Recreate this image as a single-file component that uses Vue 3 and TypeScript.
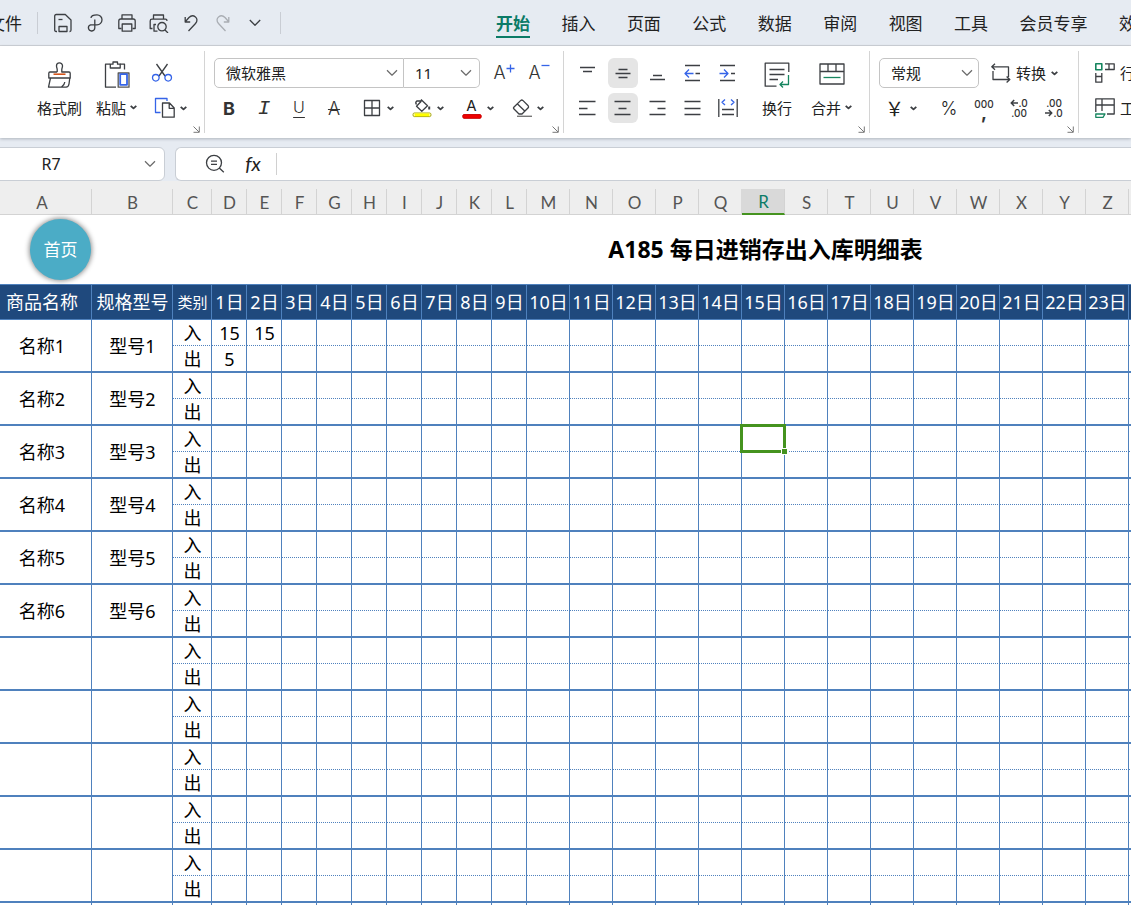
<script setup lang="ts">
import { h, ref, type FunctionalComponent } from 'vue'

type Stroke = { d: string; tone?: string; fill?: boolean; w?: number }
type Glyph = { w: number; h: number; strokes: Stroke[] }

const BLUE = '#3564e8'
const GREEN = '#16855f'

const glyphs: Record<string, Glyph> = {
  save: { w: 20, h: 20, strokes: [
    { d: 'M4 18.5H3.2Q1.7 18.5 1.7 17V3Q1.7 1.5 3.2 1.5H12.3L18 7V17Q18 18.5 16.8 18.5H16.5' },
    { d: 'M6 18.5V13.5H14V18.5Z' },
    { d: 'M5.5 6.5H9.5' },
  ] },
  export: { w: 20, h: 20, strokes: [
    { d: 'M6 5C6 2.5 8 1.8 12 1.8A5 5 0 0 1 12 11.8H5.5A3.2 3.2 0 1 0 9.8 15V6.5' },
  ] },
  print: { w: 20, h: 20, strokes: [
    { d: 'M5 6V1.8H15V6' },
    { d: 'M4.5 15.5H1.8V8Q1.8 6 3.8 6H16.2Q18.2 6 18.2 8V15.5H15.5' },
    { d: 'M5.2 11H14.8V18.2H5.2Z' },
  ] },
  preview: { w: 20, h: 20, strokes: [
    { d: 'M4.5 6V2H14.5V6' },
    { d: 'M3.5 15.5H1.2V8Q1.2 6.2 3 6.2H16.5Q18 6.2 18 8' },
    { d: 'M7 11.5H5V18.2H8.5' },
    { d: 'M13 9.5A4.2 4.2 0 1 0 13 17.9A4.2 4.2 0 1 0 13 9.5M16 17L19 20' },
  ] },
  undo: { w: 20, h: 20, strokes: [{ d: 'M4.2 4V9H9.2M4.5 8.5L8 4.5C12 .5 19 5 14.5 10.5L7.5 18' }] },
  redo: { w: 20, h: 20, strokes: [{ d: 'M15.8 4V9H10.8M15.5 8.5L12 4.5C8 .5 1 5 5.5 10.5L12.5 18', tone: '#a9adb3' }] },
  down: { w: 12, h: 8, strokes: [{ d: 'M.8 1L6 6.2L11.2 1' }] },
  chevron: { w: 12, h: 8, strokes: [{ d: 'M1 1.3L6 6.2L11 1.3', tone: '#6b6b6b', w: 1.2 }] },
  caret: { w: 7, h: 5, strokes: [{ d: 'M.7 .8L3.5 3.4L6.3 .8', w: 1.8 }] },
  brush: { w: 26, h: 28, strokes: [
    { d: 'M10.2 11V8.5C10.2 7 9.5 6.8 9.5 4.8A3 3 0 0 1 15.5 4.8C15.5 6.8 14.8 7 14.8 8.5V11H22Q23.2 11 23.2 12.2V17H1.8V12.2Q1.8 11 3 11H10.2' },
    { d: 'M3.5 17L1.5 26.2H19Q21.5 26 22 23L22.8 17M14.5 26Q17.5 24 17.8 21' },
    { d: 'M6.5 13.2H18.5', tone: '#d4541a', w: 1.6 },
  ] },
  paste: { w: 26, h: 28, strokes: [
    { d: 'M6 3.2H1.5V26.2H12M16 3.2H20.5V8.5' },
    { d: 'M6.3 7V3.2H9V1H13.5V3.2H16.2V7Z' },
    { d: 'M14.2 26.2V12H25V26.2Z', tone: '#555' },
    { d: 'M16.2 13.2H23V23.8H16.2Z', tone: BLUE, w: 1.8 },
  ] },
  cut: { w: 22, h: 20, strokes: [
    { d: 'M5.5 1L14 13M16.5 1L8 13' },
    { d: 'M4.8 11.5A3.3 3.3 0 1 0 4.8 18.1A3.3 3.3 0 1 0 4.8 11.5M17.2 11.5A3.3 3.3 0 1 0 17.2 18.1A3.3 3.3 0 1 0 17.2 11.5', tone: BLUE },
  ] },
  copy: { w: 22, h: 22, strokes: [
    { d: 'M6.5 15.5H1.5V1.5H13V4', tone: BLUE },
    { d: 'M8.5 6H15.5L20.2 11V20.2H8.5ZM15.2 6.3V11.3H20' },
  ] },
  grid: { w: 18, h: 18, strokes: [{ d: 'M1.5 1.5H16.5V16.5H1.5ZM9 1.5V16.5M1.5 9H16.5' }] },
  fill: { w: 20, h: 20, strokes: [
    { d: 'M4.5 6.5A2.5 2.5 0 0 1 4.8 3H9.5M9 1.5L15.5 7.8L9.8 13.3L4.5 8.3L9.5 3' },
    { d: 'M17.2 8.5V11.5', w: 2 },
    { d: 'M2.2 15H17.8Q19 15 19 16.8T17.8 18.6H2.2Q1 18.6 1 16.8T2.2 15Z', tone: '#a8a800', w: 1 },
    { d: 'M2.5 15.4H17.5V18.2H2.5Z', tone: '#ffff00', fill: true },
  ] },
  redbar: { w: 20, h: 5, strokes: [
    { d: 'M2 .6H18Q19.3 .6 19.3 2.4T18 4.3H2Q.7 4.3 .7 2.4T2 .6Z', tone: '#f00000', fill: true },
    { d: 'M2 .6H18Q19.3 .6 19.3 2.4T18 4.3H2Q.7 4.3 .7 2.4T2 .6Z', tone: '#c80000', w: 1 },
  ] },
  eraser: { w: 20, h: 20, strokes: [
    { d: 'M7 16L1.8 10.8Q1 10 1.8 9.2L8.8 2.4Q9.8 1.5 10.8 2.4L16.2 7.8Q17 8.8 16.2 9.8L10 16ZM5.5 6L13 13.2' },
    { d: 'M5 18.3H20', tone: '#777', w: 1.4 },
  ] },
  plus: { w: 9, h: 9, strokes: [{ d: 'M4.5 .5V8.5M.5 4.5H8.5', tone: BLUE }] },
  minus: { w: 9, h: 9, strokes: [{ d: 'M.5 1.5H8.5', tone: BLUE }] },
  top: { w: 18, h: 18, strokes: [{ d: 'M1 3.5H16M4 7.5H13' }] },
  middle: { w: 18, h: 18, strokes: [{ d: 'M4.5 5.5H13.5M1.5 9.5H16.5M4.5 13.5H13.5' }] },
  bottom: { w: 18, h: 18, strokes: [{ d: 'M4 11.5H13M1 15.5H16' }] },
  outdent: { w: 18, h: 18, strokes: [
    { d: 'M1 1.5H16M11.5 9.5H16M1 16.5H16' },
    { d: 'M9.5 9.5H1M5 5.5L1 9.5L5 13.5', tone: BLUE },
  ] },
  indent: { w: 18, h: 18, strokes: [
    { d: 'M1 1.5H16M12 9.5H16M1 16.5H16' },
    { d: 'M.5 9.5H9M5 5.5L9 9.5L5 13.5', tone: BLUE },
  ] },
  left: { w: 18, h: 18, strokes: [{ d: 'M0 2.5H16.5M0 9.5H8.5M0 15.5H16.5' }] },
  center: { w: 18, h: 18, strokes: [{ d: 'M.5 2.5H16.5M4.5 9.5H12.5M.5 15.5H16.5' }] },
  right: { w: 18, h: 18, strokes: [{ d: 'M.5 2.5H16.5M8.5 9.5H16.5M.5 15.5H16.5' }] },
  justify: { w: 18, h: 18, strokes: [{ d: 'M.5 2.5H16.5M.5 9.5H16.5M.5 15.5H16.5' }] },
  distribute: { w: 20, h: 20, strokes: [
    { d: 'M.8 1V19M19.2 1V19M4 11.5H16M4 16.5H16' },
    { d: 'M7 1.5L4 4.3L7 7.1M13 1.5L16 4.3L13 7.1', tone: BLUE },
  ] },
  wrap: { w: 26, h: 26, strokes: [
    { d: 'M12.5 24.2H1.2V1.2H24.8V10' },
    { d: 'M5.5 7.5H20.5M5.5 12.5H20.5M5.5 17.5H14' },
    { d: 'M24.5 13V22.5H16M19 19.5L16 22.5L19 25.5', tone: GREEN },
  ] },
  merge: { w: 26, h: 26, strokes: [
    { d: 'M1 2H25V22H1ZM1 9.5H25M9 2V9.5M17 2V9.5' },
    { d: 'M4.5 15.5H21.5', tone: GREEN },
  ] },
  convert: { w: 20, h: 20, strokes: [
    { d: 'M4 .8L.8 3.8L4 6.8M.8 3.8H17.5V14M2 8V16.5H18.8M15.6 13.5L18.8 16.5L15.6 19.5' },
  ] },
  arrowLeft: { w: 8, h: 8, strokes: [{ d: 'M8 4H1.5M4.2 1L1.2 4L4.2 7', w: 1.5 }] },
  arrowRight: { w: 8, h: 8, strokes: [{ d: 'M0 4H6.5M3.8 1L6.8 4L3.8 7', w: 1.5 }] },
  rows: { w: 20, h: 20, strokes: [
    { d: 'M10 .8H19.2V6.5H10M14 .8V6.5M.8 10V19.2H6.8V10M.8 13.5H6.8' },
    { d: 'M.8 .8H6.8V6.8H.8Z', tone: GREEN, w: 1.6 },
  ] },
  sheet: { w: 20, h: 20, strokes: [
    { d: 'M.8 14V.8H19.2V16H12M.8 7H19.2M7 .8V13' },
    { d: 'M.8 16H10L8 19.3H.8Z', tone: GREEN },
  ] },
  launcher: { w: 7, h: 7, strokes: [{ d: 'M.5 .5L6 6M6.3 .5V6.3H.5', tone: '#777', w: 1 }] },
  lens: { w: 20, h: 20, strokes: [
    { d: 'M9 1.3A7.5 7.5 0 1 0 9 16.3A7.5 7.5 0 1 0 9 1.3M14.3 14L18.8 18.2M6 7.2H12M6 10.4H12' },
  ] },
}

const Icon: FunctionalComponent<{ name: string }> = (props) => {
  const g = glyphs[props.name]
  return h(
    'svg',
    { width: g.w, height: g.h, viewBox: `0 0 ${g.w} ${g.h}`, fill: 'none', 'aria-hidden': 'true' },
    g.strokes.map((s) =>
      h('path', {
        d: s.d,
        fill: s.fill ? s.tone : 'none',
        stroke: s.fill ? 'none' : s.tone ?? '#3c3f43',
        'stroke-width': s.w ?? 1.3,
        'stroke-linejoin': 'round',
      }),
    ),
  )
}
Icon.props = ['name']

const quick = [
  { icon: 'save', label: '保存' },
  { icon: 'export', label: '输出为PDF' },
  { icon: 'print', label: '打印' },
  { icon: 'preview', label: '打印预览' },
  { icon: 'undo', label: '撤销' },
  { icon: 'redo', label: '恢复' },
  { icon: 'down', label: '更多' },
]
const tabs = ['开始', '插入', '页面', '公式', '数据', '审阅', '视图', '工具', '会员专享', '效率']
const activeTab = ref('开始')

const aligns = [
  { icon: 'top', label: '顶端对齐' },
  { icon: 'middle', label: '垂直居中', on: true },
  { icon: 'bottom', label: '底端对齐' },
  { icon: 'outdent', label: '减少缩进' },
  { icon: 'indent', label: '增加缩进' },
  { icon: 'left', label: '左对齐' },
  { icon: 'center', label: '水平居中', on: true },
  { icon: 'right', label: '右对齐' },
  { icon: 'justify', label: '两端对齐' },
  { icon: 'distribute', label: '分散对齐' },
]

const cellRef = ref('R7')
const formula = ref('')

const days = Array.from({ length: 31 }, (_, i) => i + 1)
const columnName = (n: number): string =>
  n < 26 ? String.fromCharCode(65 + n) : 'A' + String.fromCharCode(65 + n - 26)
const letters = Array.from({ length: 35 }, (_, i) => columnName(i))
const selectedColumn = 'R'

type Item = { name: string; model: string; inbound: Record<number, number>; outbound: Record<number, number> }
const items: Item[] = Array.from({ length: 14 }, (_, i) => ({
  name: i < 6 ? `名称${i + 1}` : '',
  model: i < 6 ? `型号${i + 1}` : '',
  inbound: i === 0 ? { 1: 15, 2: 15 } : {},
  outbound: i === 0 ? { 1: 5 } : {},
}))
const isSelected = (row: number, day: number) => row === 2 && day === 15
</script>

<template>
  <div class="app">
    <header class="topbar">
      <button class="file" type="button">文件</button>
      <div class="quick">
        <button v-for="q in quick" :key="q.icon" type="button" :aria-label="q.label"><Icon :name="q.icon" /></button>
      </div>
      <nav class="tabs">
        <button
          v-for="t in tabs"
          :key="t"
          type="button"
          :class="{ active: t === activeTab }"
          @click="activeTab = t"
        >{{ t }}</button>
      </nav>
    </header>

    <section class="ribbon">
      <div class="group clipboard">
        <button class="big" type="button"><span class="pic"><Icon name="brush" /></span><span class="cap">格式刷</span></button>
        <button class="big" type="button"><span class="pic"><Icon name="paste" /></span><span class="cap">粘贴<Icon name="caret" /></span></button>
        <div class="stack">
          <button class="tool" type="button" aria-label="剪切"><Icon name="cut" /></button>
          <button class="tool drop copy" type="button" aria-label="复制"><span><Icon name="copy" /></span><Icon name="caret" /></button>
        </div>
        <button class="launch" type="button" aria-label="剪贴板设置"><Icon name="launcher" /></button>
      </div>

      <div class="group font">
        <div class="stack">
          <div class="line">
            <div class="fontbox">
              <label class="combo face">
                <select aria-label="字体"><option>微软雅黑</option></select><Icon name="chevron" />
              </label>
              <label class="combo size">
                <select aria-label="字号"><option>11</option></select><Icon name="chevron" />
              </label>
            </div>
            <button class="tool letter grow" type="button" aria-label="增大字号">A<Icon name="plus" /></button>
            <button class="tool letter grow" type="button" aria-label="减小字号">A<Icon name="minus" /></button>
          </div>
          <div class="line">
            <button class="tool letter bold" type="button" aria-label="加粗">B</button>
            <button class="tool letter italic" type="button" aria-label="倾斜">I</button>
            <button class="tool letter under" type="button" aria-label="下划线">U</button>
            <button class="tool letter strike" type="button" aria-label="删除线">A</button>
            <div class="drops">
              <button class="tool drop" type="button" aria-label="边框"><span><Icon name="grid" /></span><Icon name="caret" /></button>
              <button class="tool drop" type="button" aria-label="填充颜色"><span><Icon name="fill" /></span><Icon name="caret" /></button>
              <button class="tool drop" type="button" aria-label="字体颜色"><span class="colour">A<Icon name="redbar" /></span><Icon name="caret" /></button>
              <button class="tool drop" type="button" aria-label="清除"><span><Icon name="eraser" /></span><Icon name="caret" /></button>
            </div>
          </div>
        </div>
        <button class="launch" type="button" aria-label="字体设置"><Icon name="launcher" /></button>
      </div>

      <div class="group align">
        <div class="aligns">
          <button
            v-for="a in aligns"
            :key="a.icon"
            class="tool"
            type="button"
            :class="{ on: a.on }"
            :aria-pressed="!!a.on"
            :aria-label="a.label"
          ><Icon :name="a.icon" /></button>
        </div>
        <button class="big" type="button"><span class="pic"><Icon name="wrap" /></span><span class="cap">换行</span></button>
        <button class="big" type="button"><span class="pic"><Icon name="merge" /></span><span class="cap">合并<Icon name="caret" /></span></button>
        <button class="launch" type="button" aria-label="对齐设置"><Icon name="launcher" /></button>
      </div>

      <div class="group number">
        <div class="stack">
          <div class="line convert">
            <label class="combo format">
              <select aria-label="数字格式"><option>常规</option></select><Icon name="chevron" />
            </label>
            <button class="wide" type="button"><Icon name="convert" /><span>转换</span><Icon name="caret" /></button>
          </div>
          <div class="line">
            <button class="tool drop yen" type="button" aria-label="货币"><span>￥</span><Icon name="caret" /></button>
            <button class="tool percent" type="button" aria-label="百分比">%</button>
            <button class="tool digits" type="button" aria-label="千位分隔"><span>000</span><b>,</b></button>
            <button class="tool digits" type="button" aria-label="增加小数位"><span><Icon name="arrowLeft" />.0</span><span>.00</span></button>
            <button class="tool digits" type="button" aria-label="减少小数位"><span>.00</span><span><Icon name="arrowRight" />.0</span></button>
          </div>
        </div>
        <button class="launch" type="button" aria-label="数字设置"><Icon name="launcher" /></button>
      </div>

      <div class="group cells">
        <div class="stack">
          <button class="wide" type="button"><Icon name="rows" /><span>行和列</span></button>
          <button class="wide" type="button"><Icon name="sheet" /><span>工作表</span></button>
        </div>
      </div>
    </section>

    <section class="formulabar">
      <div class="namebox">
        <input v-model="cellRef" aria-label="名称框" type="text" />
        <button type="button" aria-label="选择名称"><Icon name="chevron" /></button>
      </div>
      <div class="formula">
        <button type="button" aria-label="查找"><Icon name="lens" /></button>
        <button class="fx" type="button" aria-label="插入函数">fx</button>
        <input v-model="formula" aria-label="编辑栏" type="text" />
      </div>
    </section>

    <main class="sheet">
      <table>
        <colgroup>
          <col class="c-name" /><col class="c-model" /><col class="c-kind" />
          <col v-for="d in days" :key="d" :class="d < 10 ? 'c-short' : 'c-long'" />
          <col class="c-last" />
        </colgroup>
        <thead>
          <tr class="letters">
            <th v-for="l in letters" :key="l" scope="col" :class="{ picked: l === selectedColumn }">{{ l }}</th>
          </tr>
          <tr class="title">
            <td :colspan="letters.length">
              <button class="home" type="button">首页</button>
              <h1>A185 每日进销存出入库明细表</h1>
            </td>
          </tr>
          <tr class="heads">
            <th scope="col">商品名称</th>
            <th scope="col">规格型号</th>
            <th scope="col" class="small">类别</th>
            <th v-for="d in days" :key="d" scope="col">{{ d }}日</th>
            <th></th>
          </tr>
        </thead>
        <tbody v-for="(item, r) in items" :key="r">
          <tr class="in">
            <td rowspan="2" class="tall">{{ item.name }}</td>
            <td rowspan="2" class="tall">{{ item.model }}</td>
            <td>入</td>
            <td v-for="d in days" :key="d" :class="{ current: isSelected(r, d) }">
              {{ item.inbound[d] }}<span v-if="isSelected(r, d)" class="cursor"></span>
            </td>
            <td></td>
          </tr>
          <tr class="out">
            <td>出</td>
            <td v-for="d in days" :key="d">{{ item.outbound[d] }}</td>
            <td></td>
          </tr>
        </tbody>
      </table>
    </main>
  </div>
</template>

<style>
body {
  margin: 0;
  overflow: hidden;
}
</style>

<style scoped>
.app {
  display: flex;
  flex-direction: column;
  height: 100vh;
  overflow: hidden;
  background: #e6ebf2;
  color: #222;
  font-family: "Noto Sans", "Noto Sans CJK SC", sans-serif;
  font-size: 15px;
}
svg {
  display: block;
  flex: none;
}
button,
input,
select {
  margin: 0;
  padding: 0;
  border: 0;
  background: none;
  color: inherit;
  font: inherit;
  outline: none;
}
button {
  display: flex;
  flex: none;
  align-items: center;
  justify-content: center;
  white-space: nowrap;
}

.topbar {
  display: flex;
  flex: none;
  align-items: center;
  height: 45px;
  border-bottom: 1px solid #cdd0d5;
  font-size: 17px;
}
.file {
  margin-left: -12px;
}
.quick {
  display: flex;
  gap: 2px;
  margin-left: 15px;
  padding: 0 10px;
  border: solid #c9cdd4;
  border-width: 0 1px;
}
.quick button {
  width: 30px;
  height: 22px;
}
.tabs {
  display: flex;
  flex: 1;
  justify-content: space-between;
  margin: 0 -22px 0 215px;
}
.tabs button {
  height: 30px;
  padding-top: 2px;
  border-bottom: 2px solid transparent;
}
.tabs .active {
  border-color: #0c7b67;
  color: #0c7b67;
  font-weight: 700;
}

.ribbon {
  position: relative;
  z-index: 1;
  display: flex;
  flex: none;
  height: 92px;
  background: #fff;
  box-shadow: 0 1px 3px #aeb4bc;
}
.group {
  position: relative;
  display: flex;
  flex: none;
  align-items: flex-start;
  box-sizing: border-box;
  height: 82px;
  margin-top: 5px;
  padding-top: 7px;
  padding-left: 9px;
  border-right: 1px solid #d4d4d4;
}
.clipboard {
  width: 205px;
  gap: 14px;
  padding-left: 37px;
}
.font {
  width: 359px;
}
.align {
  width: 306px;
  gap: 19px;
}
.number {
  width: 209px;
}
.cells {
  padding-left: 16px;
  border: 0;
}
.stack {
  display: flex;
  flex-direction: column;
  align-items: flex-start;
  gap: 5px;
}
.line {
  display: flex;
  align-items: center;
  gap: 5px;
}
.drops {
  display: flex;
  gap: 5px;
  margin-left: 2px;
}
.aligns {
  display: grid;
  grid-template-columns: repeat(5, 30px);
  gap: 5px;
}
.tool {
  width: 30px;
  height: 30px;
  border-radius: 6px;
}
.tool.on {
  background: #e5e5e5;
}
.clipboard .stack .tool {
  margin-left: -4px;
}
.clipboard .stack .copy {
  margin-left: -2px;
}
.drop {
  justify-content: flex-start;
  width: 45px;
}
.drop > span {
  display: flex;
  justify-content: center;
  width: 31px;
}
.big {
  flex-direction: column;
  gap: 5px;
}
.pic,
.cap {
  display: flex;
  align-items: center;
  gap: 4px;
  box-sizing: border-box;
  height: 30px;
}
.pic {
  padding-top: 4px;
}
.cap {
  padding-bottom: 2px;
}
.wide {
  gap: 5px;
  height: 30px;
}
.wide span {
  padding-bottom: 2px;
}
.convert {
  gap: 12px;
}
.launch {
  position: absolute;
  right: 4px;
  bottom: 0;
}

.fontbox {
  display: flex;
  margin-right: 4px;
}
.combo {
  display: grid;
  align-items: center;
  box-sizing: border-box;
  height: 30px;
  border: 1px solid #c4c4c4;
  border-radius: 5px;
  background: #fff;
}
.combo > * {
  grid-area: 1 / 1;
}
.combo svg {
  justify-self: end;
  margin-right: 5px;
  pointer-events: none;
}
.size svg {
  margin-right: 7px;
}
.combo select {
  width: 100%;
  height: 28px;
  padding-left: 11px;
  appearance: none;
}
.face {
  width: 190px;
  border-radius: 5px 0 0 5px;
}
.size {
  width: 76px;
  border-left: 0;
  border-radius: 0 5px 5px 0;
}
.format {
  width: 100px;
}

.letter {
  color: #333;
  font-family: Inter, sans-serif;
  font-size: 18px;
}
.grow {
  align-items: flex-start;
  font-weight: 300;
  line-height: 30px;
}
.grow svg {
  margin-top: 6px;
}
.bold {
  font-weight: 700;
}
.italic {
  font-family: "Liberation Mono", monospace;
  font-size: 21px;
  font-style: italic;
}
.under {
  padding-bottom: 3px;
  font-size: 16px;
  font-weight: 300;
  text-decoration: underline 1px;
  text-underline-offset: 4px;
}
.strike {
  font-size: 18px;
  font-weight: 300;
  text-decoration: line-through 1px;
}
.drop > .colour {
  flex-direction: column;
  align-items: center;
  font-family: Inter, sans-serif;
  line-height: 16px;
}
.yen {
  margin-right: 5px;
  font-size: 19px;
}
.percent {
  font-family: Inter, sans-serif;
  font-size: 18px;
  font-weight: 300;
}
.digits {
  flex-direction: column;
  color: #333;
  font-family: Inter, sans-serif;
  font-size: 10px;
  font-weight: 500;
  line-height: 10px;
}
.digits span {
  display: flex;
  align-items: center;
}
.digits b {
  font-size: 18px;
  line-height: 8px;
}

.formulabar {
  display: flex;
  flex: none;
  gap: 10px;
  padding-top: 9px;
}
.namebox,
.formula {
  display: flex;
  align-items: center;
  box-sizing: border-box;
  height: 34px;
  border: 1px solid #c9ced5;
  background: #fff;
}
.namebox {
  width: 173px;
  margin-left: -8px;
  border-radius: 6px;
  font-size: 16px;
}
.namebox input {
  flex: 1;
  width: 0;
  padding-right: 27px;
  text-align: center;
}
.namebox button {
  width: 28px;
}
.formula {
  flex: 1;
  padding-left: 24px;
  border-radius: 6px 0 0 6px;
  border-right: 0;
}
.formula button {
  width: 30px;
}
.formula .fx {
  width: 46px;
  padding-bottom: 2px;
  font-family: Lato, sans-serif;
  font-size: 20px;
  font-style: italic;
}
.formula input {
  flex: 1;
  height: 22px;
  padding-left: 8px;
  border-left: 1px solid #d0d0d0;
}

.sheet {
  flex: 1;
  overflow: hidden;
  padding-top: 8px;
  background: linear-gradient(#eeeeee 34px, #ffffff 34px);
  color: #000;
  font-size: 18px;
}
table {
  width: 1547px;
  margin-left: -8px;
  border-spacing: 0;
  table-layout: fixed;
}
.c-name {
  width: 100px;
}
.c-model {
  width: 81px;
}
.c-kind {
  width: 39px;
}
.c-short {
  width: 35px;
}
.c-long {
  width: 43px;
}
.c-last {
  width: 66px;
}
th,
td {
  padding: 0;
  border: 0 solid #4f81bd;
  font-weight: 400;
  text-align: center;
  white-space: nowrap;
}
.letters th {
  padding: 2px 0 0 1px;
  border-color: #d3d3d3;
  border-width: 0 1px 1px 0;
  background: #eeeeee;
  color: #555;
  font-family: Lato, sans-serif;
  font-size: 17px;
  line-height: 23px;
}
.letters .picked {
  border-bottom: 2px solid #45931f;
  background: #d9d9d9;
  box-shadow: -1px 0 #d9d9d9;
  color: #0c7b67;
  line-height: 22px;
}
.title td {
  position: relative;
  height: 69px;
  border-bottom-width: 1px;
  background: #fff;
}
h1 {
  margin: 0;
  font-size: 23px;
  font-weight: 700;
  line-height: 69px;
}
.home {
  position: absolute;
  top: 4px;
  left: 38px;
  width: 61px;
  height: 61px;
  padding-bottom: 3px;
  border-radius: 50%;
  background: #4bacc6;
  box-shadow: 0 0 5px 1px #00000070;
  color: #fff;
  font-size: 17px;
}
.heads th {
  padding-left: 1px;
  border-width: 0 1px 1px 0;
  background: #1f497d;
  color: #fff;
  line-height: 34px;
}
.heads .small {
  font-size: 15px;
}
.in td,
.out td {
  height: 23px;
  padding: 2px 0 0 1px;
  border-width: 0 1px 2px 0;
  background: #fff;
  line-height: 23px;
}
.in td:not(.tall) {
  border-bottom: 1px dotted #4f81bd;
}
td.current {
  position: relative;
}
.cursor {
  position: absolute;
  z-index: 1;
  inset: -2px;
  border: 3px solid #45931f;
}
.cursor::after {
  position: absolute;
  right: -5px;
  bottom: -5px;
  width: 5px;
  height: 5px;
  border: 1px solid #fff;
  background: #45931f;
  content: "";
}
</style>
